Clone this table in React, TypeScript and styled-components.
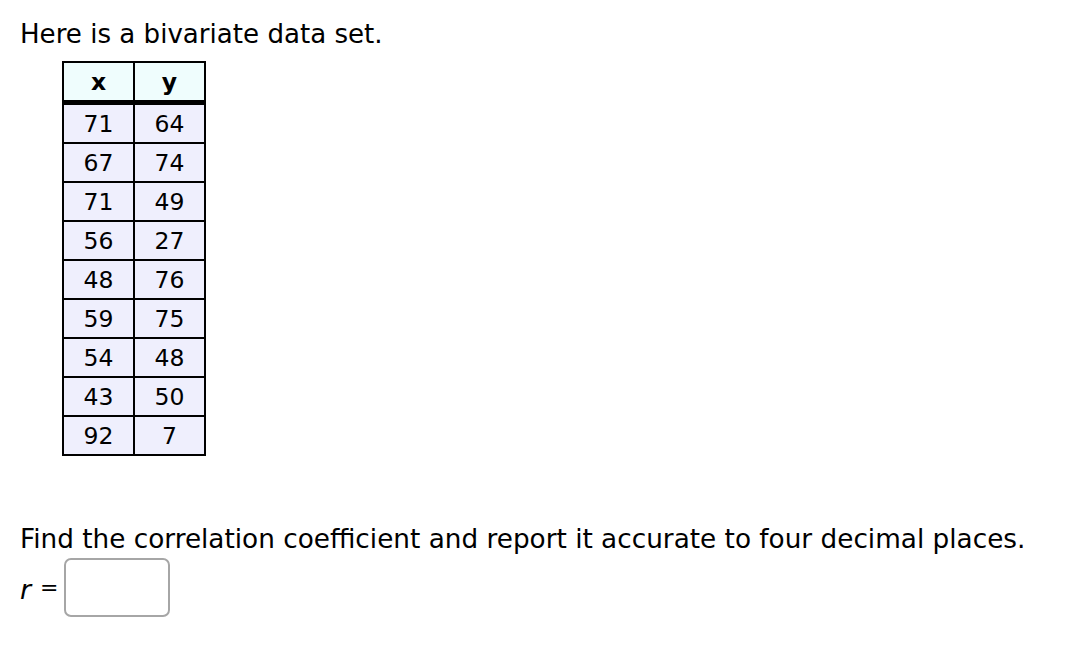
import * as React from "react";
import styled, {createGlobalStyle} from "styled-components";

const rows: [number, number][] = [
    [71, 64], [67, 74], [71, 49], [56, 27], [48, 76],
    [59, 75], [54, 48], [43, 50], [92, 7],
];

export default function App() {
    return (
        <Page>
            <GlobalStyle/>
            <Prompt>Here is a bivariate data set.</Prompt>
            <DataTable>
                <thead>
                <tr>
                    <HeadCell>x</HeadCell>
                    <HeadCell>y</HeadCell>
                </tr>
                </thead>
                <tbody>
                {rows.map(([x, y], i) => (
                    <tr key={i}>
                        <BodyCell>{x}</BodyCell>
                        <BodyCell>{y}</BodyCell>
                    </tr>
                ))}
                </tbody>
            </DataTable>
            <Question>Find the correlation coefficient and report it accurate to four decimal places.</Question>
            <AnswerRow>
                <Var>r</Var>
                <Eq>=</Eq>
                <AnswerBox type="text"/>
            </AnswerRow>
        </Page>
    )
}

const GlobalStyle = createGlobalStyle`
  body {
    margin: 0;
    background: #ffffff;
  }
`

const Page = styled.div`
  padding: 19px 20px;
  font-family: "DejaVu Sans", Verdana, sans-serif;
  color: #000000;
`

const Prompt = styled.p`
  margin: 0;
  font-size: 26.1px;
  line-height: 30px;
`

const DataTable = styled.table`
  border-collapse: collapse;
  margin: 12px 0 0 42px;
  font-size: 23.5px;
`

const HeadCell = styled.th`
  width: 69px;
  height: 37px;
  padding: 0;
  font-weight: bold;
  background: #effdfd;
  border: 2px solid #000000;
  border-bottom: 5px solid #000000;
  text-align: center;
`

const BodyCell = styled.td`
  width: 69px;
  height: 37px;
  padding: 0;
  background: #efeffd;
  border: 2px solid #000000;
  text-align: center;
`

const Question = styled.p`
  margin: 68px 0 0;
  font-size: 26.3px;
  line-height: 30px;
`

const AnswerRow = styled.div`
  display: flex;
  align-items: center;
  margin-top: 4px;
`

const Var = styled.span`
  font-style: italic;
  font-size: 27px;
  margin: 4px 9px 0 0;
`

const Eq = styled.span`
  font-size: 22px;
  margin-right: 5px;
`

const AnswerBox = styled.input`
  width: 106px;
  height: 59px;
  box-sizing: border-box;
  border: 2px solid #a6a6a6;
  border-radius: 7px;
  outline: none;
`
